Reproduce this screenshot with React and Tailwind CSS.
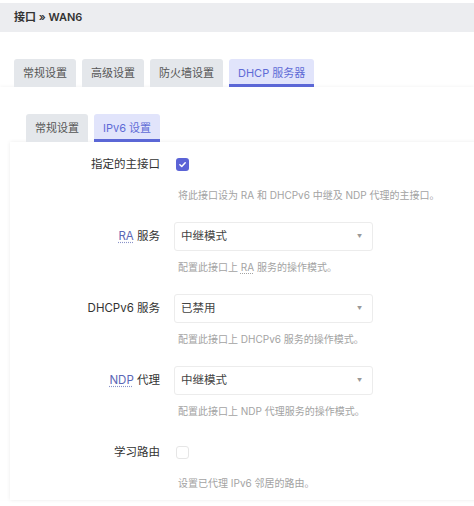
import { useState } from "react";

const font = { fontFamily: "Inter, 'Noto Sans CJK SC', sans-serif" };

function Tab({ label, active }) {
  return (
    <div
      className={`h-[28px] px-[9px] flex items-center rounded-t-[3px] text-[11px] ${
        active
          ? "bg-[#e1e4fb] text-[#5f6bd6] border-b-[3px] border-[#5b67d6] pt-[3px]"
          : "bg-[#e4e7eb] text-[#555]"
      }`}
    >
      {label}
    </div>
  );
}

function Abbr({ children }) {
  return (
    <span className="text-[#5b67b6] underline decoration-dotted decoration-[#8a93c9] underline-offset-2">
      {children}
    </span>
  );
}

function Checkbox({ checked, onChange }) {
  return (
    <button
      onClick={onChange}
      className={`ml-[2px] w-[13px] h-[13px] rounded-[3px] flex items-center justify-center ${
        checked ? "bg-[#5b63d6]" : "bg-white border border-[#e6e6e6]"
      }`}
    >
      {checked && (
        <svg width="9" height="9" viewBox="0 0 12 12" fill="none">
          <path
            d="M2.5 6.3 5 8.6 9.6 3.6"
            stroke="white"
            strokeWidth="2"
            strokeLinecap="round"
            strokeLinejoin="round"
          />
        </svg>
      )}
    </button>
  );
}

function Select({ value }) {
  return (
    <div className="w-[199px] h-[29px] border border-[#ececec] rounded-[3px] bg-white flex items-center justify-between pl-[6px] pr-[10px] text-[11.5px] text-[#444]">
      <span>{value}</span>
      <span className="text-[5px] text-[#999]">▼</span>
    </div>
  );
}

function Row({ label, control, desc }) {
  return (
    <div className="flex">
      <div className="w-[150px] shrink-0 h-[29px] flex items-center justify-end text-[11.5px] text-[#333]">
        {label}
      </div>
      <div className="ml-[14px]">
        <div className="h-[29px] flex items-center">{control}</div>
        <div className="mt-[8px] h-[16px] ml-[4px] flex items-center text-[10px] text-[#a3a3a3] whitespace-nowrap">
          {desc}
        </div>
      </div>
    </div>
  );
}

export default function App() {
  const [master, setMaster] = useState(true);
  const [learn, setLearn] = useState(false);

  return (
    <div className="w-[474px] h-[506px] bg-white overflow-hidden" style={font}>
      {/* Breadcrumb */}
      <div className="mt-[3px] h-[29px] bg-[#ecedf0] flex items-center px-[14px] text-[11px] font-semibold text-[#333]">
        接口 » WAN6
      </div>

      {/* Main tabs */}
      <div className="mt-[27px] pl-[14px] flex gap-[6px]">
        <Tab label="常规设置" />
        <Tab label="高级设置" />
        <Tab label="防火墙设置" />
        <Tab label="DHCP 服务器" active />
      </div>

      <div className="pl-[10px] pt-[27px] shadow-[0_-1px_3px_rgba(0,0,0,0.04)]">
        {/* Sub tabs */}
        <div className="pl-[16px] flex gap-[6px]">
          <Tab label="常规设置" />
          <Tab label="IPv6 设置" active />
        </div>

        {/* Panel */}
        <div className="w-[480px] bg-white shadow-[0_0_4px_rgba(0,0,0,0.08)] pt-[8px] pb-[9px] flex flex-col gap-[19px]">
          <Row
            label="指定的主接口"
            control={<Checkbox checked={master} onChange={() => setMaster(!master)} />}
            desc="将此接口设为 RA 和 DHCPv6 中继及 NDP 代理的主接口。"
          />
          <Row
            label={
              <>
                <Abbr>RA</Abbr>&nbsp;服务
              </>
            }
            control={<Select value="中继模式" />}
            desc={
              <>
                配置此接口上&nbsp;
                <span className="underline decoration-dotted underline-offset-2">RA</span>
                &nbsp;服务的操作模式。
              </>
            }
          />
          <Row
            label="DHCPv6 服务"
            control={<Select value="已禁用" />}
            desc="配置此接口上 DHCPv6 服务的操作模式。"
          />
          <Row
            label={
              <>
                <Abbr>NDP</Abbr>&nbsp;代理
              </>
            }
            control={<Select value="中继模式" />}
            desc="配置此接口上 NDP 代理服务的操作模式。"
          />
          <Row
            label="学习路由"
            control={<Checkbox checked={learn} onChange={() => setLearn(!learn)} />}
            desc="设置已代理 IPv6 邻居的路由。"
          />
        </div>
      </div>
    </div>
  );
}
